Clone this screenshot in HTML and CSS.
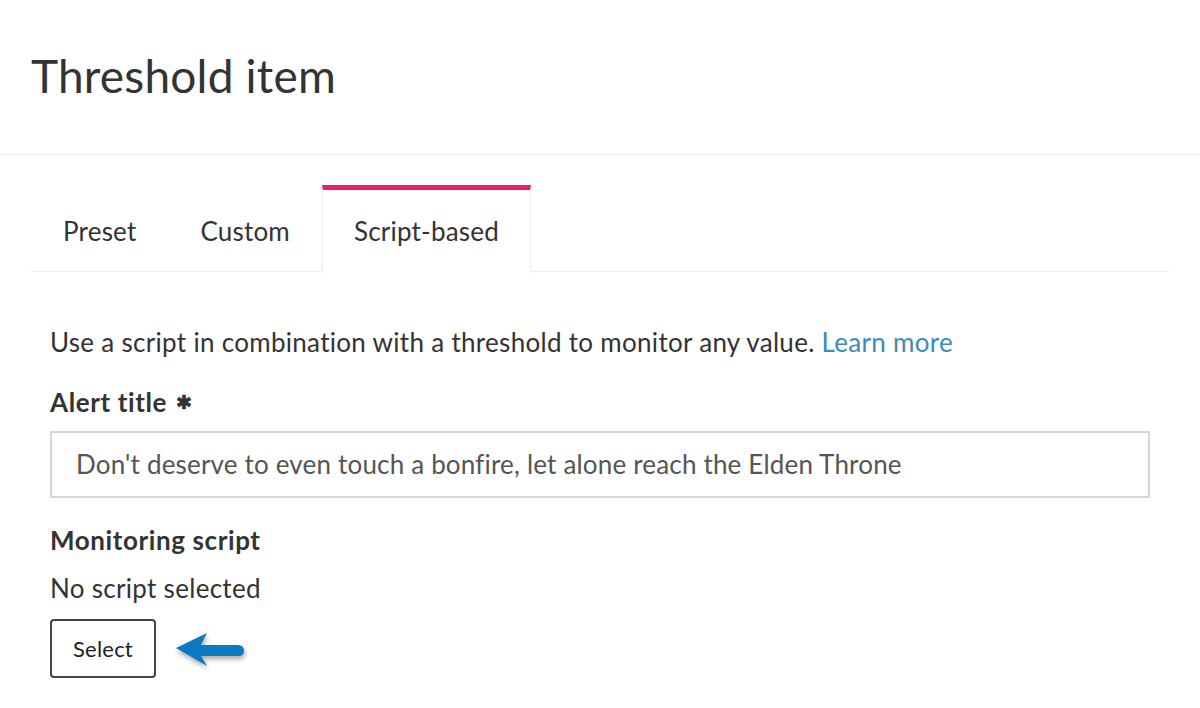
FILE: index.html
```html
<!DOCTYPE html>
<html lang="en">
<head>
<meta charset="utf-8">
<title>Threshold item</title>
<link rel="stylesheet" href="styles.css">
</head>
<body>
<header class="page-header">
  <h1 class="page-title">Threshold item</h1>
</header>
<main class="content">
  <nav class="tabs">
    <div class="tab">Preset</div>
    <div class="tab">Custom</div>
    <div class="tab tab-active">Script-based</div>
  </nav>
  <section class="panel">
    <p class="intro">Use a script in combination with a threshold to monitor any value. <a class="link" href="#">Learn more</a></p>
    <label class="field-label">Alert title <span class="req">&#x2731;</span></label>
    <div class="input">Don't deserve to even touch a bonfire, let alone reach the Elden Throne</div>
    <div class="field-label label-script">Monitoring script</div>
    <p class="status">No script selected</p>
    <div class="actions">
      <button class="btn">Select</button>
      <svg class="arrow" width="80" height="44" viewBox="0 0 80 44">
        <defs>
          <filter id="sh" x="-30%" y="-30%" width="160%" height="180%">
            <feDropShadow dx="1" dy="3" stdDeviation="2.5" flood-color="#000" flood-opacity="0.35"/>
          </filter>
        </defs>
        <path filter="url(#sh)" fill="#0b79c2" d="M6 21 L37 6 L31 18 L68 18 Q74 18 74 24 Q74 29 68 29 L31 29 L37 39 Z"/>
      </svg>
    </div>
  </section>
</main>
</body>
</html>
```
FILE: styles.css
```css
* { box-sizing: border-box; }
html, body { margin: 0; padding: 0; background: #fff; }
body {
  font-family: "Lato", "Open Sans", sans-serif;
  color: #333;
  width: 1200px;
  height: 708px;
  overflow: hidden;
  letter-spacing: 0.3px;
}
.page-header {
  height: 155px;
  border-bottom: 1px solid #ececec;
  padding: 48px 31px 0;
}
.page-title {
  margin: 0;
  font-weight: 400;
  font-size: 46px;
  line-height: 56px;
  color: #333;
  letter-spacing: 0.2px;
}
.content {
  padding: 30px 30px 0 31px;
}
.tabs {
  display: flex;
  border-bottom: 1px solid #eeeeee;
  height: 87px;
}
.tab {
  padding: 0 31px;
  font-size: 26px;
  letter-spacing: 0.2px;
  line-height: 82px;
  height: 87px;
  border-top: 5px solid transparent;
  border-left: 1px solid transparent;
  border-right: 1px solid transparent;
  color: #333;
}
.tab-active {
  border-top-color: #ee1c6a;
  border-left-color: #eeeeee;
  border-right-color: #eeeeee;
  background: #fff;
  margin-bottom: -1px;
  height: 88px;
}
.panel {
  padding: 52px 20px 0 19px;
}
.intro {
  margin: 0;
  font-size: 26px;
  line-height: 36px;
}
.link { color: #3d8bb9; text-decoration: none; }
.field-label {
  display: block;
  font-weight: 700;
  font-size: 26px;
  line-height: 36px;
  margin-top: 24px;
  letter-spacing: 0.6px;
}
.req { font-size: 19px; vertical-align: 3px; margin-left: 2px; }
.input {
  margin-top: 11px;
  height: 67px;
  border: 2px solid #d3d3d8;
  padding: 0 24px;
  font-size: 26px;
  line-height: 63px;
  color: #555;
  letter-spacing: 0.18px;
}
.label-script { margin-top: 24px; }
.status {
  margin: 12px 0 0;
  font-size: 26px;
  line-height: 36px;
}
.actions {
  margin-top: 13px;
  display: flex;
  align-items: center;
  gap: 14px;
}
.btn {
  width: 106px;
  height: 59px;
  border: 2px solid #444;
  border-radius: 4px;
  background: #fff;
  font-family: "Lato", sans-serif;
  font-size: 22px;
  letter-spacing: 0.2px;
  color: #222;
  padding: 0;
}
.arrow { display: block; }
```
